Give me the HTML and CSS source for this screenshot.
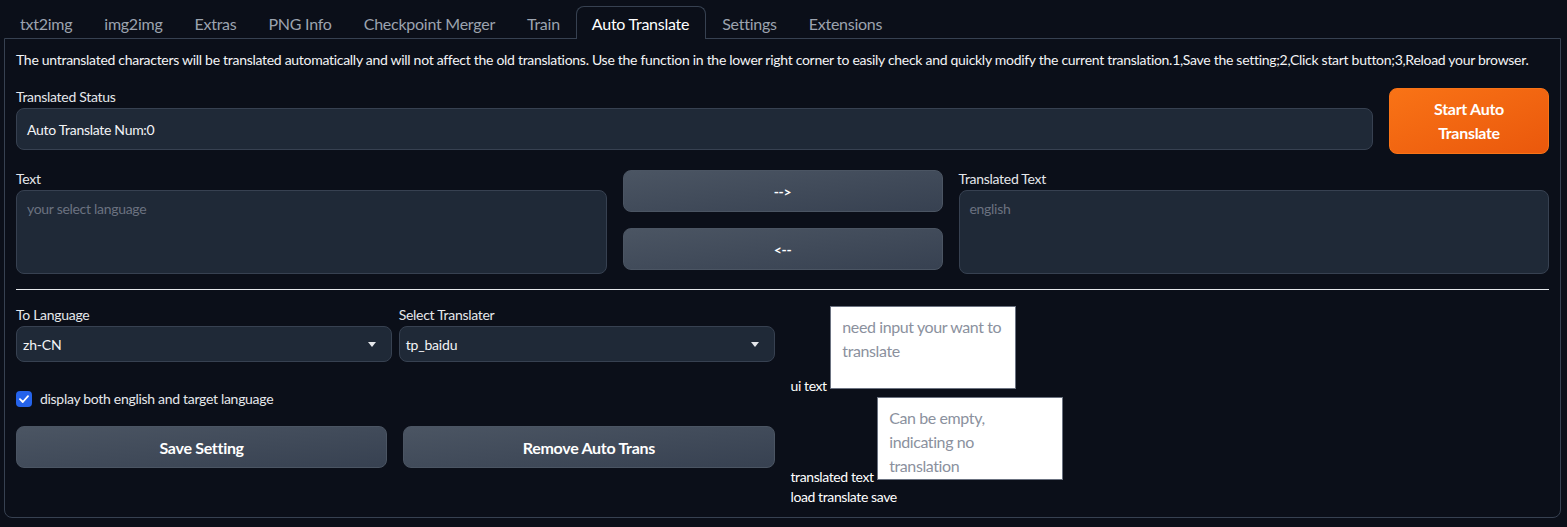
FILE: index.html
```html
<!DOCTYPE html>
<html lang="en">
<head>
<meta charset="utf-8">
<title>Auto Translate</title>
<link rel="stylesheet" href="styles.css">
</head>
<body>
<div class="app">
  <nav class="tabs">
    <button class="tab">txt2img</button>
    <button class="tab">img2img</button>
    <button class="tab">Extras</button>
    <button class="tab">PNG Info</button>
    <button class="tab">Checkpoint Merger</button>
    <button class="tab">Train</button>
    <button class="tab active">Auto Translate</button>
    <button class="tab">Settings</button>
    <button class="tab">Extensions</button>
  </nav>
  <section class="panel">
    <p class="desc">The untranslated characters will be translated automatically and will not affect the old translations. Use the function in the lower right corner to easily check and quickly modify the current translation.1,Save the setting;2,Click start button;3,Reload your browser.</p>

    <div class="row row-status">
      <div class="field grow">
        <span class="label">Translated Status</span>
        <div class="textbox">Auto Translate Num:0</div>
      </div>
      <button class="btn primary start">Start Auto<br>Translate</button>
    </div>

    <div class="row row-text">
      <div class="field side">
        <span class="label">Text</span>
        <textarea class="area" placeholder="your select language"></textarea>
      </div>
      <div class="mid">
        <button class="btn secondary arrow">--&gt;</button>
        <button class="btn secondary arrow">&lt;--</button>
      </div>
      <div class="field side">
        <span class="label">Translated Text</span>
        <textarea class="area" placeholder="english"></textarea>
      </div>
    </div>

    <hr class="sep">

    <div class="row row-settings">
      <div class="settings-left">
        <div class="dropdowns">
          <div class="field dd">
            <span class="label">To Language</span>
            <div class="select"><span>zh-CN</span><svg class="caret" width="8" height="5" viewBox="0 0 8 5"><path d="M0 0H8L4 5Z" fill="#e5e7eb"/></svg></div>
          </div>
          <div class="field dd">
            <span class="label">Select Translater</span>
            <div class="select"><span>tp_baidu</span><svg class="caret" width="8" height="5" viewBox="0 0 8 5"><path d="M0 0H8L4 5Z" fill="#e5e7eb"/></svg></div>
          </div>
        </div>
        <label class="check">
          <span class="box"><svg width="10" height="8" viewBox="0 0 10 8"><path d="M1 4.2L3.8 7 9 1.2" fill="none" stroke="#fff" stroke-width="1.8" stroke-linecap="round" stroke-linejoin="round"/></svg></span>
          display both english and target language
        </label>
        <div class="actions">
          <button class="btn secondary big">Save Setting</button>
          <button class="btn secondary big">Remove Auto Trans</button>
        </div>
      </div>
      <div class="settings-right">
        <span class="raw-label">ui text</span> <textarea class="raw" placeholder="need input your want to&#10;translate"></textarea><br>
        <span class="raw-label">translated text</span> <textarea class="raw" placeholder="Can be empty,&#10;indicating no&#10;translation"></textarea><br>
        <span class="raw-label">load translate save</span>
      </div>
    </div>
  </section>
</div>
</body>
</html>
```

FILE: styles.css
```css
* { box-sizing: border-box; }

html, body {
  margin: 0;
  padding: 0;
  background: #0b0f19;
}

body {
  font-family: Lato, "Noto Sans", "Liberation Sans", sans-serif;
  color: #e5e7eb;
  font-size: 14px;
}

.app {
  padding: 6px 6px 0 4px;
}

.tabs {
  display: flex;
  margin-bottom: -1px;
}

.tab {
  position: relative;
  height: 33px;
  padding: 0 15px;
  border: 1px solid transparent;
  border-bottom: none;
  border-radius: 8px 8px 0 0;
  background: transparent;
  color: #9ca3af;
  font-family: inherit;
  font-size: 16px;
  letter-spacing: -0.25px;
  cursor: pointer;
}

.tab.active {
  z-index: 1;
  padding: 0 16px 0 15px;
  border-color: #374151;
  background: #0b0f19;
  color: #ffffff;
}

.panel {
  border: 1px solid #374151;
  border-radius: 0 0 8px 8px;
  padding: 11px 11px 10px 11px;
}

.desc {
  margin: 0;
  line-height: 20px;
  font-size: 14px;
  letter-spacing: -0.29px;
  color: #f3f4f6;
  white-space: nowrap;
}

.row {
  display: flex;
  gap: 16px;
}

.row-status {
  margin-top: 17px;
  align-items: flex-start;
}

.field {
  display: flex;
  flex-direction: column;
}

.grow { flex: 1; }

.label {
  display: block;
  line-height: 20px;
  margin-bottom: 1px;
  font-size: 14px;
  letter-spacing: -0.3px;
  color: #e5e7eb;
}

.textbox {
  height: 42px;
  padding: 0 10px;
  display: flex;
  align-items: center;
  background: #1f2937;
  border: 1px solid #374151;
  border-radius: 8px;
  color: #f3f4f6;
  letter-spacing: -0.3px;
}

.btn {
  font-family: inherit;
  font-weight: 700;
  color: #ffffff;
  border-radius: 8px;
  cursor: pointer;
  letter-spacing: -0.3px;
}

.primary {
  background: linear-gradient(to bottom right, #f97316, #ea580c);
  border: 1px solid #f97316;
}

.secondary {
  background: linear-gradient(to bottom right, #4b5563, #374151);
  border: 1px solid #4b5563;
}

.start {
  width: 160px;
  height: 66px;
  margin-top: 1px;
  font-size: 16px;
  line-height: 24px;
}

.row-text {
  margin-top: 15px;
}

.side {
  flex: 1;
}

.area {
  display: block;
  height: 84px;
  resize: none;
  padding: 9px 10px;
  background: #1f2937;
  border: 1px solid #374151;
  border-radius: 8px;
  font-family: inherit;
  font-size: 14px;
  letter-spacing: -0.3px;
  color: #f3f4f6;
  outline: none;
}

.area::placeholder { color: #6b7280; }

.mid {
  width: 320px;
  display: flex;
  flex-direction: column;
  gap: 16px;
  padding-top: 1px;
}

.arrow {
  height: 42px;
  font-size: 14px;
}

.sep {
  margin: 15px 0 0 0;
  border: none;
  border-top: 1px solid #e5e7eb;
  height: 0;
}

.row-settings {
  margin-top: 15px;
  align-items: flex-start;
}

.settings-left {
  flex: 1;
}

.settings-right {
  flex: 1;
  line-height: 20px;
  font-size: 14px;
}

.dropdowns {
  display: flex;
  gap: 7px;
}

.dd { flex: 1; }

.select {
  height: 36px;
  padding: 0 15px 0 6px;
  display: flex;
  align-items: center;
  justify-content: space-between;
  background: #1f2937;
  border: 1px solid #374151;
  border-radius: 8px;
  color: #f3f4f6;
  font-size: 14px;
  letter-spacing: -0.2px;
}

.check {
  display: flex;
  align-items: center;
  gap: 8px;
  margin-top: 27px;
  line-height: 20px;
  letter-spacing: -0.3px;
  color: #e5e7eb;
}

.box {
  width: 16px;
  height: 16px;
  border-radius: 4px;
  background: #2563eb;
  display: flex;
  align-items: center;
  justify-content: center;
}

.actions {
  display: flex;
  gap: 16px;
  margin-top: 17px;
}

.big {
  flex: 1;
  height: 42px;
  font-size: 16px;
}

.raw-label {
  color: #ffffff;
  letter-spacing: -0.4px;
}

.raw {
  display: inline-block;
  vertical-align: baseline;
  width: 186px;
  height: 83px;
  margin: 1px 0 2px 0;
  padding: 8px 11px;
  resize: none;
  background: #ffffff;
  border: 1px solid #6b7280;
  border-radius: 0;
  font-family: inherit;
  font-size: 16px;
  line-height: 24px;
  letter-spacing: -0.4px;
  outline: none;
  overflow: hidden;
}

.raw::placeholder { color: #8b919e; }
```
